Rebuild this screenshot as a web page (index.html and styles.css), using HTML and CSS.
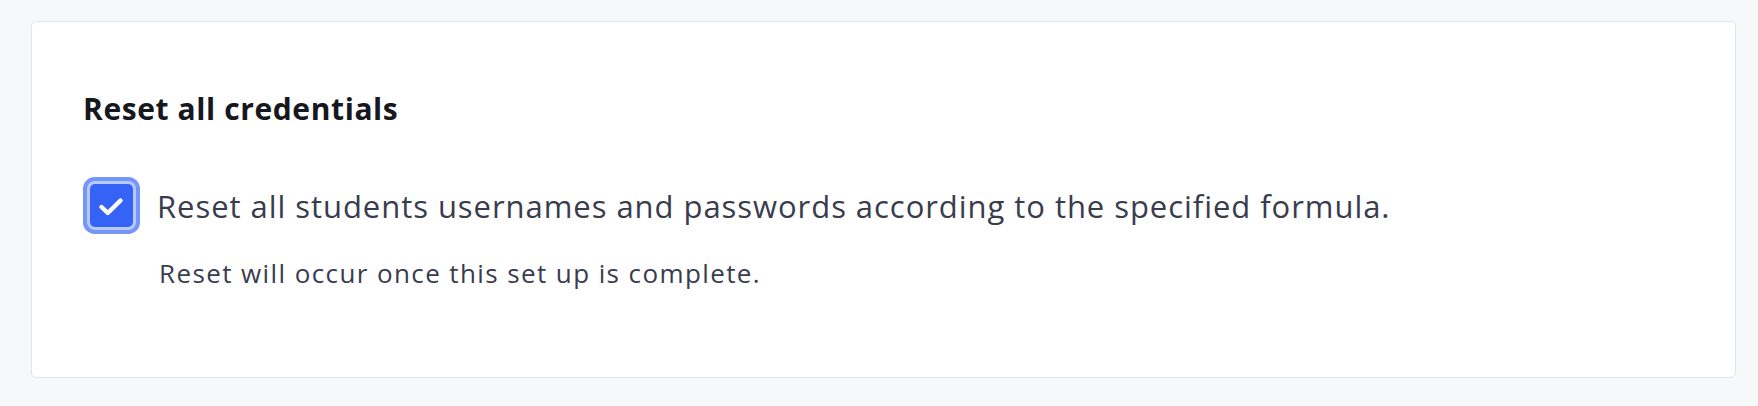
FILE: index.html
```html
<!DOCTYPE html>
<html lang="en">
<head>
<meta charset="utf-8">
<title>Reset all credentials</title>
<link rel="stylesheet" href="styles.css">
</head>
<body>
<main class="page">
  <section class="card">
    <h2 class="card-title">Reset all credentials</h2>
    <label class="check-row">
      <span class="checkbox" role="checkbox" aria-checked="true">
        <svg viewBox="0 0 43 43" width="43" height="43" aria-hidden="true">
          <path d="M11.5 23 L17.8 29 L30.5 16.5" fill="none" stroke="#ffffff" stroke-width="4.4" stroke-linecap="round" stroke-linejoin="round"/>
        </svg>
      </span>
      <span class="check-label">Reset all students usernames and passwords according to the specified formula.</span>
    </label>
    <p class="hint">Reset will occur once this set up is complete.</p>
  </section>
</main>
</body>
</html>
```

FILE: styles.css
```css
html, body {
  margin: 0;
  padding: 0;
  background: #f7f8fa;
}

body {
  font-family: "Open Sans", Lato, "Liberation Sans", sans-serif;
  width: 1758px;
  height: 406px;
  overflow: hidden;
}

.page {
  padding: 21px 22px 28px 31px;
}

.card {
  box-sizing: border-box;
  height: 357px;
  background: #ffffff;
  border: 1px solid #e3e4e8;
  border-radius: 5px;
  padding: 69px 50px 0 51px;
}

.card-title {
  margin: 0;
  font-size: 30px;
  line-height: 35px;
  font-weight: 700;
  letter-spacing: 0.6px;
  color: #17171f;
}

.check-row {
  display: flex;
  align-items: center;
  gap: 17px;
  margin-top: 58px;
}

.checkbox {
  flex: 0 0 auto;
  width: 43px;
  height: 43px;
  margin: 0 7px;
  border-radius: 5px;
  background: #3563f6;
  box-shadow: 0 0 0 3px #b9c8fd, 0 0 0 7px #7495fa;
  display: flex;
}

.checkbox svg {
  display: block;
}

.check-label {
  font-size: 31px;
  line-height: 36px;
  letter-spacing: 0.95px;
  color: #393c4d;
}

.hint {
  margin: 31px 0 0 76px;
  font-size: 26px;
  line-height: 30px;
  letter-spacing: 1.4px;
  color: #393c4d;
}
```
